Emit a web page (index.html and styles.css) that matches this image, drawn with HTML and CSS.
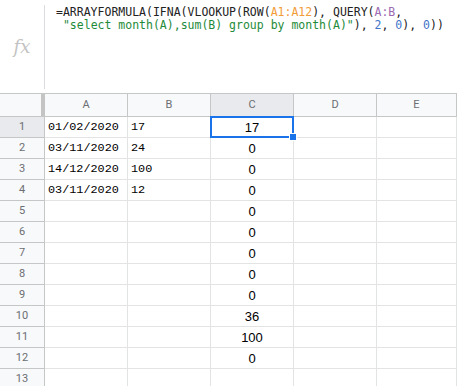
FILE: index.html
```html
<!DOCTYPE html>
<html lang="en">
<head>
    <meta charset="UTF-8">
    <title>Sheet</title>
    <link rel="stylesheet" href="styles.css">
</head>
<body>
    <div class="formula-bar">
        <div class="fx">fx</div>
        <div class="fx-sep"></div>
        <div class="formula">=ARRAYFORMULA(IFNA(VLOOKUP(ROW(<span class="ref1">A1:A12</span>), QUERY(<span class="ref2">A:B</span>,
 <span class="str">"select month(A),sum(B) group by month(A)"</span>), <span class="num">2</span>, <span class="num">0</span>), <span class="num">0</span>))</div>
    </div>

    <div class="grid">
        <div class="corner"></div>
        <div class="col-head">A</div>
        <div class="col-head">B</div>
        <div class="col-head active">C</div>
        <div class="col-head">D</div>
        <div class="col-head">E</div>

        <div class="row-head active">1</div>
        <div class="cell mono">01/02/2020</div>
        <div class="cell mono">17</div>
        <div class="cell val selected">17</div>
        <div class="cell"></div>
        <div class="cell"></div>

        <div class="row-head">2</div>
        <div class="cell mono">03/11/2020</div>
        <div class="cell mono">24</div>
        <div class="cell val">0</div>
        <div class="cell"></div>
        <div class="cell"></div>

        <div class="row-head">3</div>
        <div class="cell mono">14/12/2020</div>
        <div class="cell mono">100</div>
        <div class="cell val">0</div>
        <div class="cell"></div>
        <div class="cell"></div>

        <div class="row-head">4</div>
        <div class="cell mono">03/11/2020</div>
        <div class="cell mono">12</div>
        <div class="cell val">0</div>
        <div class="cell"></div>
        <div class="cell"></div>

        <div class="row-head">5</div>
        <div class="cell"></div>
        <div class="cell"></div>
        <div class="cell val">0</div>
        <div class="cell"></div>
        <div class="cell"></div>

        <div class="row-head">6</div>
        <div class="cell"></div>
        <div class="cell"></div>
        <div class="cell val">0</div>
        <div class="cell"></div>
        <div class="cell"></div>

        <div class="row-head">7</div>
        <div class="cell"></div>
        <div class="cell"></div>
        <div class="cell val">0</div>
        <div class="cell"></div>
        <div class="cell"></div>

        <div class="row-head">8</div>
        <div class="cell"></div>
        <div class="cell"></div>
        <div class="cell val">0</div>
        <div class="cell"></div>
        <div class="cell"></div>

        <div class="row-head">9</div>
        <div class="cell"></div>
        <div class="cell"></div>
        <div class="cell val">0</div>
        <div class="cell"></div>
        <div class="cell"></div>

        <div class="row-head">10</div>
        <div class="cell"></div>
        <div class="cell"></div>
        <div class="cell val">36</div>
        <div class="cell"></div>
        <div class="cell"></div>

        <div class="row-head">11</div>
        <div class="cell"></div>
        <div class="cell"></div>
        <div class="cell val">100</div>
        <div class="cell"></div>
        <div class="cell"></div>

        <div class="row-head">12</div>
        <div class="cell"></div>
        <div class="cell"></div>
        <div class="cell val">0</div>
        <div class="cell"></div>
        <div class="cell"></div>

        <div class="row-head">13</div>
        <div class="cell"></div>
        <div class="cell"></div>
        <div class="cell"></div>
        <div class="cell"></div>
        <div class="cell"></div>
    </div>
</body>
</html>
```

FILE: styles.css
```css
* {
    box-sizing: border-box;
    margin: 0;
    padding: 0;
}
body {
    background: #fff;
    font-family: Roboto, Arial, sans-serif;
    overflow: hidden;
    width: 457px;
    height: 386px;
}
.formula-bar {
    display: flex;
    height: 94px;
    border-bottom: 1px solid #c4c7c5;
}
.fx {
    width: 44px;
    padding-top: 36px;
    text-align: center;
    font-family: "DejaVu Serif", serif;
    font-style: italic;
    font-size: 18px;
    color: #c3c3c3;
}
.fx-sep {
    width: 1px;
    margin: 5px 0 4px;
    background: #dadce0;
}
.formula {
    padding: 6px 0 0 11px;
    font-family: "DejaVu Sans Mono", monospace;
    font-size: 11.5px;
    line-height: 13px;
    white-space: pre;
    color: #222;
}
.ref1 { color: #f29c38; }
.ref2 { color: #9b6ab0; }
.str { color: #1e8a3a; }
.num { color: #3f74c9; }

.grid {
    display: grid;
    grid-template-columns: 45px 83px 83px 83px 83px 1fr;
    grid-template-rows: 23px;
    grid-auto-rows: 21px;
}
.corner {
    background: #f8f9fa;
    border-bottom: 1px solid #c4c7c5;
    border-right: 4px solid #c4c4c4;
}
.col-head {
    background: #f8f9fa;
    border-right: 1px solid #c4c7c5;
    border-bottom: 1px solid #c4c7c5;
    text-align: center;
    font-size: 11px;
    line-height: 22px;
    color: #6b6e72;
}
.row-head {
    background: #f8f9fa;
    border-right: 1px solid #c4c7c5;
    border-bottom: 1px solid #c4c7c5;
    text-align: center;
    font-size: 11px;
    line-height: 20px;
    color: #6b6e72;
}
.active {
    background: #e8eaed;
}
.cell {
    border-right: 1px solid #e2e3e3;
    border-bottom: 1px solid #e2e3e3;
    padding: 0 3px;
    line-height: 20px;
    white-space: nowrap;
    overflow: hidden;
    color: #000;
}
.mono {
    font-family: "Liberation Mono", monospace;
    font-size: 11.8px;
    line-height: 21px;
}
.val {
    text-align: center;
    font-family: "Liberation Sans", Arial, sans-serif;
    font-size: 13px;
    line-height: 22px;
}
.selected {
    position: relative;
    overflow: visible;
}
.selected::before {
    content: "";
    position: absolute;
    left: -1px;
    top: -1px;
    right: -1px;
    bottom: -1px;
    border: 2px solid #1a73e8;
}
.selected::after {
    content: "";
    position: absolute;
    right: -4px;
    bottom: -4px;
    width: 6px;
    height: 6px;
    background: #1a73e8;
    border: 1px solid #fff;
}
```
